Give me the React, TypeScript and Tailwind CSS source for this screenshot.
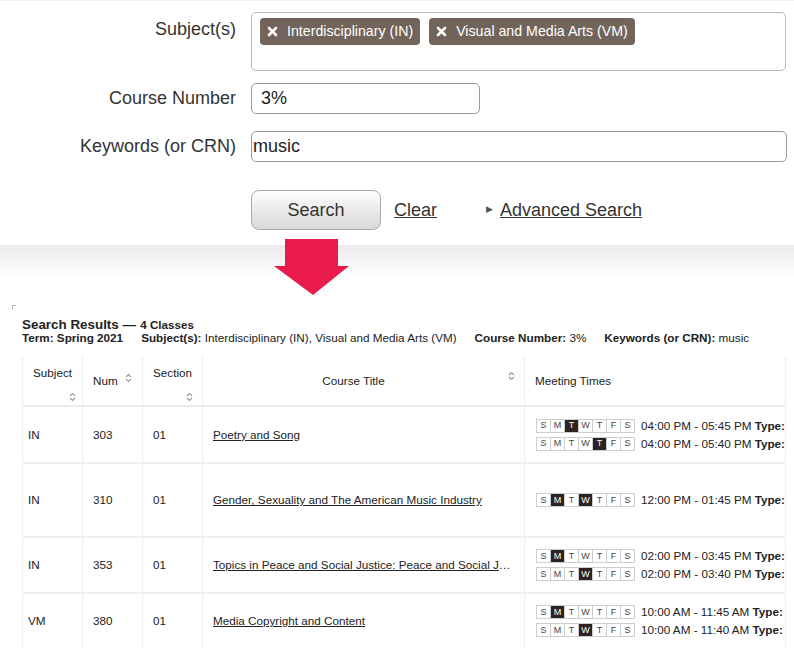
import React from "react";

const DAYS = ["S", "M", "T", "W", "T", "F", "S"];

type Meeting = { on: number[]; time: string };
type Course = { subj: string; num: string; sec: string; title: string; h: string; meetings: Meeting[] };

const courses: Course[] = [
  {
    subj: "IN", num: "303", sec: "01", title: "Poetry and Song", h: "h-[57px]",
    meetings: [
      { on: [2], time: "04:00 PM - 05:45 PM" },
      { on: [4], time: "04:00 PM - 05:40 PM" },
    ],
  },
  {
    subj: "IN", num: "310", sec: "01", title: "Gender, Sexuality and The American Music Industry", h: "h-[74px]",
    meetings: [{ on: [1, 3], time: "12:00 PM - 01:45 PM" }],
  },
  {
    subj: "IN", num: "353", sec: "01",
    title: "Topics in Peace and Social Justice: Peace and Social Justice through Music", h: "h-[56px]",
    meetings: [
      { on: [1], time: "02:00 PM - 03:45 PM" },
      { on: [3], time: "02:00 PM - 03:40 PM" },
    ],
  },
  {
    subj: "VM", num: "380", sec: "01", title: "Media Copyright and Content", h: "h-[55px]",
    meetings: [
      { on: [1], time: "10:00 AM - 11:45 AM" },
      { on: [3], time: "10:00 AM - 11:40 AM" },
    ],
  },
];

function SortIcon() {
  return (
    <svg width="7" height="10" viewBox="0 0 7 10" fill="none" stroke="#9a9a9a" strokeWidth="1.2">
      <path d="M1 4 L3.5 1.5 L6 4" />
      <path d="M1 6 L3.5 8.5 L6 6" />
    </svg>
  );
}

function Chip({ label }: { label: string }) {
  return (
    <div className="h-[27px] pl-[7px] pr-[7px] rounded-[4px] bg-[#72645a] text-white text-[14.2px] flex items-center gap-[9px]">
      <svg width="11" height="11" viewBox="0 0 11 11" stroke="white" strokeWidth="2.6" strokeLinecap="round">
        <path d="M2 2 L9 9 M9 2 L2 9" />
      </svg>
      <span>{label}</span>
    </div>
  );
}

function DayRow({ m }: { m: Meeting }) {
  return (
    <div className="flex items-center h-[14px]">
      <div className="flex border-l border-[#cdcdcd]">
        {DAYS.map((d, i) => (
          <span
            key={i}
            className={`w-[14px] h-[14px] border-y border-r border-[#cdcdcd] flex items-center justify-center text-[9px] leading-none ${
              m.on.includes(i) ? "bg-[#2b2420] text-white" : "text-[#444]"
            }`}
          >
            {d}
          </span>
        ))}
      </div>
      <span className="ml-[6px] text-[11.7px] whitespace-nowrap">
        {m.time} <b>Type:</b>
      </span>
    </div>
  );
}

export default function App() {
  return (
    <div className="w-[794px] h-[661px] overflow-hidden bg-white text-[#333] font-['Liberation_Sans',Arial,sans-serif]">
      {/* search form */}
      <div className="h-[245px] border-t border-[#f2f2f2]">
        <div className="pt-[11px] flex flex-col">
          <div className="flex">
            <div className="w-[236px] text-right pt-[7px] text-[18px] leading-[21px]">Subject(s)</div>
            <div className="ml-[15px] w-[535px] h-[59px] border border-[#b8b8b8] rounded-[5px] pt-[5px] pl-[8px] flex items-start gap-[9px]">
              <Chip label="Interdisciplinary (IN)" />
              <Chip label="Visual and Media Arts (VM)" />
            </div>
          </div>

          <div className="flex items-center mt-[12px]">
            <div className="w-[236px] text-right text-[18px] leading-[21px]">Course Number</div>
            <div className="ml-[15px] w-[229px] h-[31px] border border-[#9a9a9a] rounded-[5px] pl-[9px] flex items-center text-[18px] text-[#222]">
              3%
            </div>
          </div>

          <div className="flex items-center mt-[17px]">
            <div className="w-[236px] text-right text-[18px] leading-[21px]">Keywords (or CRN)</div>
            <div className="ml-[15px] w-[536px] h-[31px] border border-[#9a9a9a] rounded-[5px] pl-[1px] flex items-center text-[18px] text-[#222]">
              music
            </div>
          </div>

          <div className="flex items-center mt-[28px] pl-[251px]">
            <button className="w-[130px] h-[40px] rounded-[8px] border border-[#a9a9a9] bg-linear-to-b from-[#fdfdfd] to-[#d9d9d9] text-[18px] text-[#333]">
              Search
            </button>
            <a className="ml-[13px] text-[18px] underline text-[#333]">Clear</a>
            <span className="ml-[49px] text-[9px] text-[#555]">&#9654;</span>
            <a className="ml-[7px] text-[18px] underline text-[#333]">Advanced Search</a>
          </div>
        </div>
      </div>

      {/* separator band with arrow */}
      <div className="relative h-[58px] bg-[linear-gradient(#ebebeb,#ffffff_34px)]">
        <svg className="absolute left-[274px] top-[-6px]" width="75" height="56" viewBox="0 0 75 56">
          <path d="M11 0 H64 V27 H75 L39 56 L0 27 H11 Z" fill="#e91b4c" />
        </svg>
      </div>

      {/* results */}
      <div className="mt-[2px] ml-[12px] w-[4px] h-[4px] border-t border-l border-[#b5b5b5]" />
      <div className="pl-[22px] text-[#222]">
        <div className="mt-[8px] h-[14px] leading-[14px] font-bold">
          <span className="text-[13.4px]">Search Results —</span> <span className="text-[11.6px]">4 Classes</span>
        </div>
        <div className="h-[14px] leading-[14px] text-[11.7px] flex gap-[18px] whitespace-nowrap">
          <span><b>Term:</b> <b>Spring 2021</b></span>
          <span><b>Subject(s):</b> Interdisciplinary (IN), Visual and Media Arts (VM)</span>
          <span><b>Course Number:</b> 3%</span>
          <span><b>Keywords (or CRN):</b> music</span>
        </div>

        <table className="mt-[11px] w-[763px] table-fixed border-collapse text-[11.7px] text-[#222]">
          <colgroup>
            <col className="w-[60px]" />
            <col className="w-[60px]" />
            <col className="w-[60px]" />
            <col className="w-[322px]" />
            <col className="w-[261px]" />
          </colgroup>
          <thead>
            <tr className="h-[50px] border-b-2 border-[#ececec]">
              <th className="border-l border-[#eeeeee] font-normal text-left align-top pt-[10px] pl-[10px] pr-[6px]">
                <div className="leading-[14px]">Subject</div>
                <div className="flex justify-end mt-[12px]"><SortIcon /></div>
              </th>
              <th className="border-l border-[#eeeeee] font-normal text-left pl-[10px]">
                <div className="flex items-center gap-[7px]">
                  <span className="leading-[14px]">Num</span>
                  <span className="-mt-[6px]"><SortIcon /></span>
                </div>
              </th>
              <th className="border-l border-[#eeeeee] font-normal text-left align-top pt-[10px] pl-[10px] pr-[9px]">
                <div className="leading-[14px]">Section</div>
                <div className="flex justify-end mt-[12px]"><SortIcon /></div>
              </th>
              <th className="relative border-l border-[#eeeeee] font-normal text-center pr-[20px]">
                Course Title
                <span className="absolute right-[9px] top-[15px]"><SortIcon /></span>
              </th>
              <th className="border-l border-r border-[#eeeeee] font-normal text-left pl-[10px]">Meeting Times</th>
            </tr>
          </thead>
          <tbody>
            {courses.map((c, i) => (
              <tr key={i} className={`${c.h} ${i < courses.length - 1 ? "border-b-2 border-[#f0f0f0]" : ""}`}>
                <td className="border-l border-[#eeeeee] pl-[5px]">{c.subj}</td>
                <td className="border-l border-[#eeeeee] pl-[10px]">{c.num}</td>
                <td className="border-l border-[#eeeeee] pl-[10px]">{c.sec}</td>
                <td className="border-l border-[#eeeeee] pl-[10px]">
                  <a className="block max-w-[299px] truncate underline">{c.title}</a>
                </td>
                <td className="border-l border-r border-[#eeeeee] pl-[11px] overflow-hidden">
                  <div className="flex flex-col gap-[4px]">
                    {c.meetings.map((m, j) => (
                      <DayRow key={j} m={m} />
                    ))}
                  </div>
                </td>
              </tr>
            ))}
          </tbody>
        </table>
      </div>
    </div>
  );
}
